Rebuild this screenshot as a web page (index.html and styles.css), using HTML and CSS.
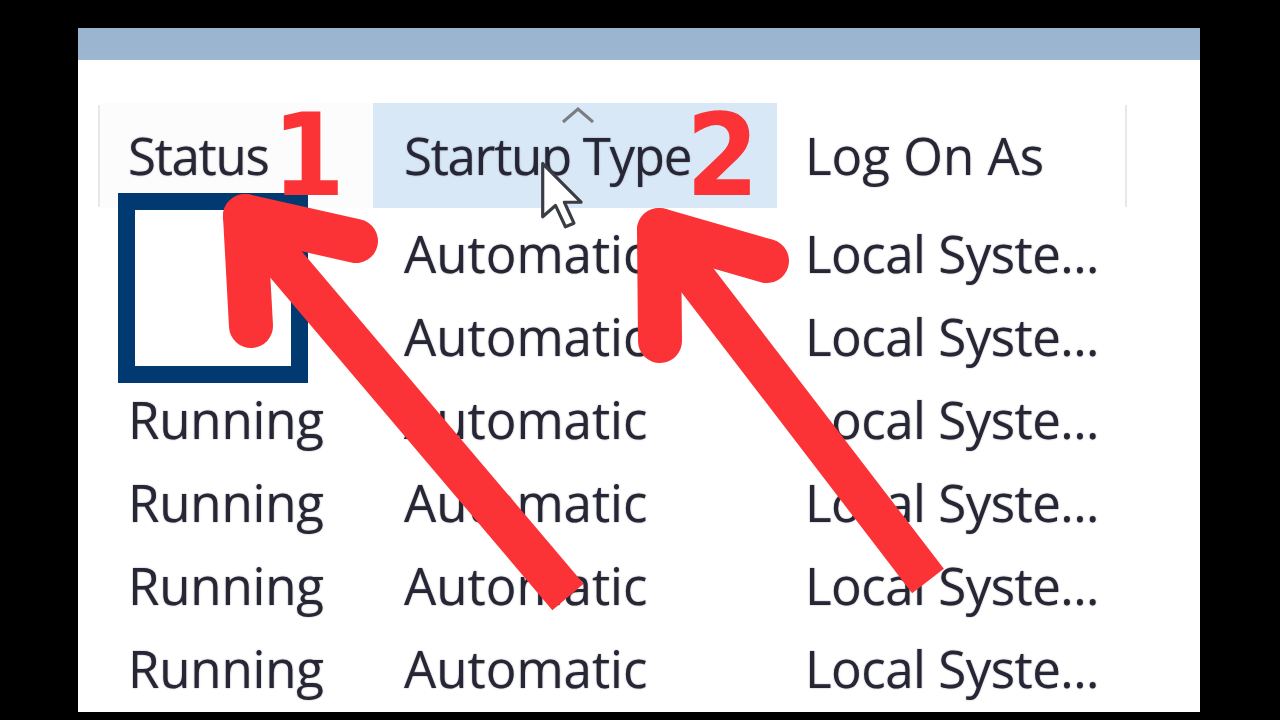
FILE: index.html
```html
<!DOCTYPE html>
<html>
<head>
<meta charset="utf-8">
<link rel="stylesheet" href="styles.css">
</head>
<body>
<div class="screen">
  <div class="panel">
    <div class="titlebar"></div>
    <div class="table">
      <div class="header">
        <div class="sep"></div>
        <div class="hcell c1">Status</div>
        <div class="hcell c2 active">Startup Type
          <svg class="caret" viewBox="0 0 38 22" width="38" height="22"><polyline points="4,18 19,5 34,18" fill="none" stroke="#7a7d84" stroke-width="3"/></svg>
        </div>
        <div class="hcell c3">Log On As</div>
        <div class="sep"></div>
      </div>
      <div class="rows">
        <div class="row"><div class="cell c1"></div><div class="cell c2">Automatic</div><div class="cell c3">Local Syste...</div></div>
        <div class="row"><div class="cell c1"></div><div class="cell c2">Automatic</div><div class="cell c3">Local Syste...</div></div>
        <div class="row"><div class="cell c1">Running</div><div class="cell c2">Automatic</div><div class="cell c3">Local Syste...</div></div>
        <div class="row"><div class="cell c1">Running</div><div class="cell c2">Automatic</div><div class="cell c3">Local Syste...</div></div>
        <div class="row"><div class="cell c1">Running</div><div class="cell c2">Automatic</div><div class="cell c3">Local Syste...</div></div>
        <div class="row"><div class="cell c1">Running</div><div class="cell c2">Automatic</div><div class="cell c3">Local Syste...</div></div>
      </div>
    </div>
  </div>

  <svg class="cursor" viewBox="0 0 14 20" width="50" height="71">
    <path d="M1,1 L1,16 L4.6,12.8 L7.4,18.8 L9.8,17.8 L7.1,11.9 L11.8,11.9 Z" fill="#ffffff" stroke="#3a3d44" stroke-width="0.9" stroke-linejoin="round"/>
  </svg>

  <div class="box"></div>
  <div class="num n1">1</div>
  <div class="num n2">2</div>

  <svg class="arrows" viewBox="0 0 1280 720" width="1280" height="720">
    <g stroke="#fb3236" fill="none">
      <line x1="250" y1="222" x2="568" y2="597" stroke-width="41" stroke-linecap="butt"/>
      <line x1="245" y1="216" x2="251" y2="326" stroke-width="44" stroke-linecap="round"/>
      <line x1="245" y1="216" x2="356" y2="241" stroke-width="44" stroke-linecap="round"/>
      <line x1="665" y1="238" x2="928" y2="581" stroke-width="40" stroke-linecap="butt"/>
      <line x1="659" y1="230" x2="660" y2="341" stroke-width="44" stroke-linecap="round"/>
      <line x1="659" y1="230" x2="767" y2="261" stroke-width="44" stroke-linecap="round"/>
    </g>
  </svg>
</div>
</body>
</html>
```

FILE: styles.css
```css
html, body {
  margin: 0;
  padding: 0;
  background: #000;
}
.screen {
  position: relative;
  width: 1280px;
  height: 720px;
  overflow: hidden;
  background: #000;
  padding-top: 28px;
  box-sizing: border-box;
}
.panel {
  margin-left: 78px;
  width: 1122px;
  height: 684px;
  background: #ffffff;
  overflow: hidden;
}
.titlebar {
  height: 32px;
  background: linear-gradient(#9ab3cf, #9db7d3);
}
.table {
  padding-top: 43px;
  font-family: "Open Sans", "Noto Sans", sans-serif;
  font-size: 51px;
  color: #262634;
  text-shadow: 0 0 1.5px rgba(30, 30, 50, 0.55);
}
.header {
  display: flex;
  margin-left: 20px;
  height: 105px;
}
.sep {
  width: 2px;
  height: 102px;
  margin-top: 2px;
  background: #e6e8ec;
}
.hcell {
  line-height: 105px;
  white-space: nowrap;
  box-sizing: border-box;
}
.header .c1 { width: 273px; padding-left: 28px; background: #fcfcfc; letter-spacing: -1.3px; }
.header .c2 { width: 404px; padding-left: 31px; letter-spacing: -1.3px; }
.header .c3 { width: 348px; padding-left: 28px; }
.active {
  position: relative;
  background: #d9e8f7;
}
.caret {
  position: absolute;
  left: 186px;
  top: 1px;
}
.rows {
  padding-top: 4px;
}
.row {
  display: flex;
  margin-left: 22px;
  height: 83px;
}
.cell {
  line-height: 83px;
  white-space: nowrap;
  box-sizing: border-box;
}
.row .c1 { width: 273px; padding-left: 28px; letter-spacing: -0.2px; }
.row .c2 { width: 404px; padding-left: 31px; }
.row .c3 { width: 350px; padding-left: 28px; letter-spacing: -0.5px; }

.cursor {
  position: absolute;
  left: 539px;
  top: 160px;
}
.box {
  position: absolute;
  left: 118px;
  top: 193px;
  width: 190px;
  height: 190px;
  border: 17px solid #003a70;
  box-sizing: border-box;
}
.num {
  position: absolute;
  font-family: "DejaVu Sans", sans-serif;
  font-weight: bold;
  font-size: 114px;
  line-height: 1;
  color: #fb3236;
  transform: scaleX(0.92);
  transform-origin: left top;
}
.n1 { left: 272px; top: 99px; }
.n2 { left: 686px; top: 99px; }
.arrows {
  position: absolute;
  left: 0;
  top: 0;
  pointer-events: none;
}
```
